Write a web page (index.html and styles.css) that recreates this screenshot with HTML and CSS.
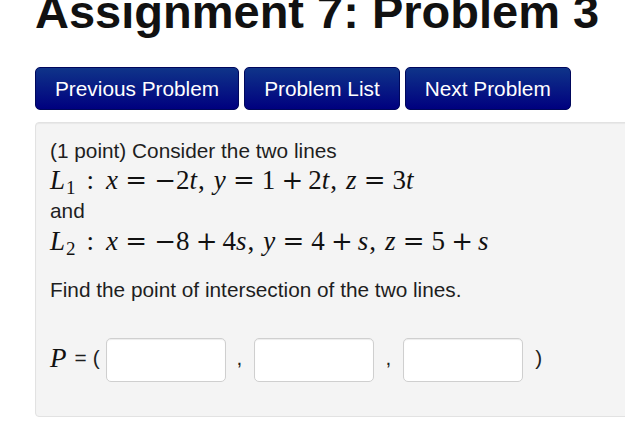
FILE: index.html
```html
<!DOCTYPE html>
<html lang="en">
<head>
  <meta charset="UTF-8" />
  <title>Assignment 7: Problem 3</title>
  <link rel="stylesheet" href="styles.css">
</head>
<body>
  <div class="page">
    <h1>Assignment 7: Problem 3</h1>

    <div class="nav">
      <button class="nav-btn">Previous Problem</button>
      <button class="nav-btn">Problem List</button>
      <button class="nav-btn">Next Problem</button>
    </div>

    <div class="problem">
      <div class="line">(1 point) Consider the two lines</div>
      <div class="math"><i>L</i><sub>1</sub><span class="colon">:</span><i>x</i><span class="rel">=</span><span class="neg">−</span>2<i>t</i>,<span class="sp"></span><i>y</i><span class="rel">=</span>1<span class="bin">+</span>2<i>t</i>,<span class="sp"></span><i>z</i><span class="rel">=</span>3<i>t</i></div>
      <div class="line">and</div>
      <div class="math"><i>L</i><sub>2</sub><span class="colon">:</span><i>x</i><span class="rel">=</span><span class="neg">−</span>8<span class="bin">+</span>4<i>s</i>,<span class="sp"></span><i>y</i><span class="rel">=</span>4<span class="bin">+</span><i>s</i>,<span class="sp"></span><i>z</i><span class="rel">=</span>5<span class="bin">+</span><i>s</i></div>

      <p class="question">Find the point of intersection of the two lines.</p>

      <div class="answer">
        <i class="var">P</i>
        <span class="sym eq">=</span>
        <span class="sym open">(</span>
        <input type="text" class="ans">
        <span class="sym comma">,</span>
        <input type="text" class="ans">
        <span class="sym comma">,</span>
        <input type="text" class="ans">
        <span class="sym close">)</span>
      </div>
    </div>
  </div>
</body>
</html>
```

FILE: styles.css
```css
html, body {
  margin: 0;
  overflow: hidden;
}
body {
  font-family: "Liberation Sans", Arial, sans-serif;
  font-size: 20.8px;
  line-height: 1.43;
  color: #1e1e1e;
  background: white;
}
.page {
  margin-left: 35px;
  width: 700px;
}
h1 {
  font-size: 47px;
  line-height: 1.1;
  font-weight: bold;
  color: #111;
  margin: -14px 0 0;
}
.nav {
  display: flex;
  gap: 5px;
  margin-top: 29px;
}
.nav-btn {
  font-family: inherit;
  font-size: 20.8px;
  line-height: 29px;
  padding: 6px 19px;
  color: white;
  background: linear-gradient(to bottom, #0f3489, #00007f);
  border: 1px solid #00075c;
  border-radius: 5px;
  cursor: pointer;
}
.problem {
  margin-top: 12px;
  background: #f4f4f4;
  border: 1px solid #e2e2e2;
  border-radius: 4px;
  box-shadow: inset 0 1px 1px rgba(0,0,0,0.05);
  padding: 13px 14px 34px;
}
.line {
  height: 29.75px;
}

/* typeset math, spaced by hand */
.math {
  font-family: "Liberation Serif", "Times New Roman", serif;
  font-size: 27px;
  height: 31px;
  line-height: 31px;
  white-space: nowrap;
  color: #111;
}
.math i {
  padding-right: 1px;
}
.math sub {
  font-size: 19px;
  line-height: 0;
  vertical-align: -5px;
}
.colon {
  margin: 0 12px 0 11px;
}
.rel, .bin, .neg {
  display: inline-block;
  width: 22px;
  text-align: center;
  font-family: "DejaVu Serif", serif;
  font-size: 26px;
}
.rel {
  margin: 0 7px 0 6px;
}
.bin {
  margin: 0 5px 0 6px;
}
.sp {
  display: inline-block;
  width: 9px;
}
.question {
  margin: 18px 0 0;
}

.answer {
  margin-top: 33px;
  height: 44px;
  display: flex;
  align-items: center;
}
.var {
  font-family: "Liberation Serif", "Times New Roman", serif;
  font-size: 27px;
  padding-right: 2px;
  padding-bottom: 4px;
  color: #111;
}
.sym {
  padding-bottom: 4px;
}
.eq {
  margin-left: 6px;
}
.open {
  margin-left: 6px;
  margin-right: 6px;
}
.comma {
  margin: 0 12px 0 11px;
}
.close {
  margin-left: 12px;
}
.ans {
  width: 120px;
  height: 44px;
  box-sizing: border-box;
  border: 1px solid #cfcfcf;
  border-radius: 5px;
  background: white;
  box-shadow: inset 0 1px 1px rgba(0,0,0,0.075);
}
```
